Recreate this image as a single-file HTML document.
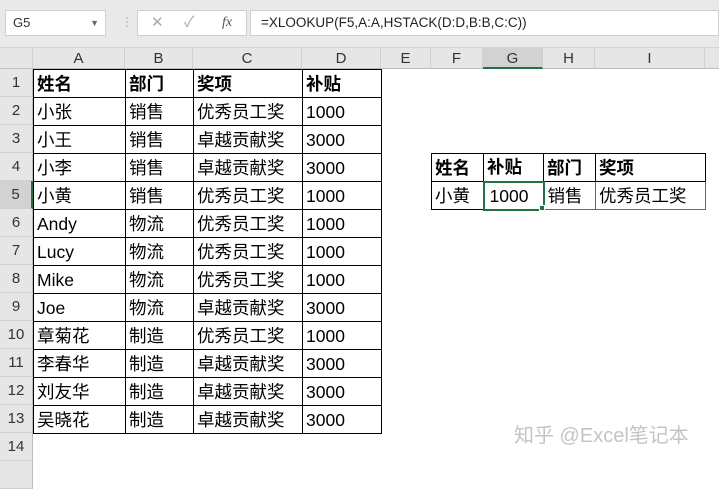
<!DOCTYPE html>
<html><head><meta charset="utf-8"><style>
*{margin:0;padding:0;box-sizing:border-box}
body{width:719px;height:463px;overflow:hidden;background:#fff;font-family:"Liberation Sans","Noto Sans CJK SC",sans-serif;position:relative}
.a{position:absolute}
.top{left:0;top:0;width:719px;height:48px;background:#e9e9e9;border-bottom:1px solid #d4d4d4}
.box{background:#fff;border:1px solid #d0d0d0}
.ch{top:48px;height:21px;background:#e6e6e6;border-right:1px solid #cfcfcf;border-bottom:1px solid #bdbdbd;text-align:center;font-size:15px;color:#333;line-height:21px}
.rh{left:0;width:33px;height:28px;background:#e6e6e6;border-bottom:1px solid #cfcfcf;border-right:1px solid #bdbdbd;text-align:center;font-size:15px;color:#333;line-height:28px}
table{position:absolute;border-collapse:collapse;table-layout:fixed}
td{border:1px solid #000;height:28px;font-size:17.5px;padding:0 0 0 3px;line-height:26px;color:#000;white-space:nowrap;overflow:hidden}
.b td{font-weight:bold}
</style></head><body>
<div class="a top"></div>
<div class="a box" style="left:5px;top:10px;width:101px;height:26px;font-size:13px;line-height:24px;padding-left:7px;color:#333">G5<span style="position:absolute;right:6px;top:0;font-size:9px;color:#666">▼</span></div>
<div class="a" style="left:121px;top:15px;color:#aaa;font-size:12px">⋮</div>
<div class="a box" style="left:137px;top:10px;width:110px;height:26px;color:#aaa;font-size:15px;line-height:24px"><span style="position:absolute;left:13px">✕</span><span style="position:absolute;left:46px">✓</span><span style="position:absolute;left:84px;color:#555;font-family:'Liberation Serif',serif;font-style:italic;font-size:14px">fx</span></div>
<div class="a box" style="left:250px;top:10px;width:469px;height:26px;font-size:13.5px;line-height:24px;padding-left:10px;color:#222">=XLOOKUP(F5,A:A,HSTACK(D:D,B:B,C:C))</div>
<div class="a ch" style="left:0;width:33px"></div>
<div class="a ch" style="left:33px;width:92px">A</div>
<div class="a ch" style="left:125px;width:68px">B</div>
<div class="a ch" style="left:193px;width:109px">C</div>
<div class="a ch" style="left:302px;width:79px">D</div>
<div class="a ch" style="left:381px;width:50px">E</div>
<div class="a ch" style="left:431px;width:52px">F</div>
<div class="a ch" style="left:483px;width:60px;background:#d2d2d2;border-bottom:2px solid #217346">G</div>
<div class="a ch" style="left:543px;width:52px">H</div>
<div class="a ch" style="left:595px;width:110px">I</div>
<div class="a ch" style="left:705px;width:14px;border-right:none"></div>
<div class="a rh" style="top:69px">1</div>
<div class="a rh" style="top:97px">2</div>
<div class="a rh" style="top:125px">3</div>
<div class="a rh" style="top:153px">4</div>
<div class="a rh" style="top:181px;background:#d2d2d2;border-right:2px solid #217346">5</div>
<div class="a rh" style="top:209px">6</div>
<div class="a rh" style="top:237px">7</div>
<div class="a rh" style="top:265px">8</div>
<div class="a rh" style="top:293px">9</div>
<div class="a rh" style="top:321px">10</div>
<div class="a rh" style="top:349px">11</div>
<div class="a rh" style="top:377px">12</div>
<div class="a rh" style="top:405px">13</div>
<div class="a rh" style="top:433px">14</div>
<div class="a rh" style="top:461px"></div>
<table style="left:33px;top:69px;width:349px">
<col style="width:92px"><col style="width:68px"><col style="width:109px"><col style="width:79px">
<tr class="b"><td>姓名</td><td>部门</td><td>奖项</td><td>补贴</td></tr>
<tr><td>小张</td><td>销售</td><td>优秀员工奖</td><td>1000</td></tr>
<tr><td>小王</td><td>销售</td><td>卓越贡献奖</td><td>3000</td></tr>
<tr><td>小李</td><td>销售</td><td>卓越贡献奖</td><td>3000</td></tr>
<tr><td>小黄</td><td>销售</td><td>优秀员工奖</td><td>1000</td></tr>
<tr><td>Andy</td><td>物流</td><td>优秀员工奖</td><td>1000</td></tr>
<tr><td>Lucy</td><td>物流</td><td>优秀员工奖</td><td>1000</td></tr>
<tr><td>Mike</td><td>物流</td><td>优秀员工奖</td><td>1000</td></tr>
<tr><td>Joe</td><td>物流</td><td>卓越贡献奖</td><td>3000</td></tr>
<tr><td>章菊花</td><td>制造</td><td>优秀员工奖</td><td>1000</td></tr>
<tr><td>李春华</td><td>制造</td><td>卓越贡献奖</td><td>3000</td></tr>
<tr><td>刘友华</td><td>制造</td><td>卓越贡献奖</td><td>3000</td></tr>
<tr><td>吴晓花</td><td>制造</td><td>卓越贡献奖</td><td>3000</td></tr>
</table>
<table style="left:431px;top:153px;width:275px">
<col style="width:52px"><col style="width:60px"><col style="width:52px"><col style="width:110px">
<tr class="b"><td>姓名</td><td>补贴</td><td>部门</td><td>奖项</td></tr>
<tr><td>小黄</td><td style="border:2px solid #217346;padding-left:5px">1000</td><td style="border-color:#000 #4a6f9a #4a6f9a #000">销售</td><td style="border-color:#4a6f9a">优秀员工奖</td></tr>
</table>
<div class="a" style="left:539px;top:205px;width:6px;height:6px;background:#217346;border:1px solid #fff"></div>
<div class="a" style="left:514px;top:419px;font-size:20px;color:#c4c4c4">知乎 @Excel笔记本</div>
</body></html>
